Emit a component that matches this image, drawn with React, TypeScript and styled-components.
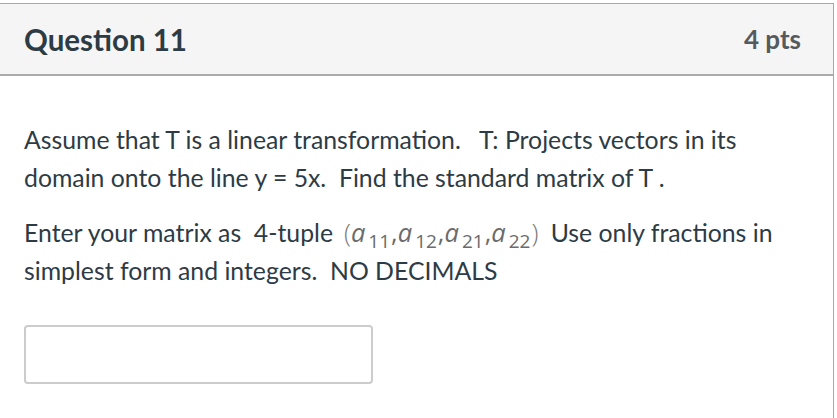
import React from "react";
import styled, { createGlobalStyle } from "styled-components";

const GlobalStyle = createGlobalStyle`
  html, body {
    margin: 0;
    padding: 0;
    background: #ffffff;
  }
  body {
    font-family: Lato, "Open Sans", "Liberation Sans", sans-serif;
    color: #2d3b45;
  }
`;

const Card = styled.div`
  margin-top: 3px;
  width: 834px;
  border-top: 1px solid #a9a9a9;
  border-right: 1px solid #a9a9a9;
  height: 415px;
  box-sizing: border-box;
`;

const Header = styled.div`
  display: flex;
  justify-content: space-between;
  align-items: center;
  height: 70px;
  padding: 0 32px 0 24px;
  background: #f5f5f5;
  border-bottom: 2px solid #ababab;
`;

const Title = styled.h2`
  margin: 0;
  font-size: 29.5px;
  font-weight: 700;
  color: #2d3b45;
`;

const Points = styled.div`
  font-size: 26px;
  font-weight: 700;
  color: #555a5e;
`;

const Body = styled.div`
  padding: 45px 24px 0 24px;
`;

const Para = styled.p`
  margin: 0 0 18px 0;
  font-size: 24.8px;
  line-height: 37.5px;
`;

const Math = styled.span`
  font-family: "Open Sans", "DejaVu Sans", sans-serif;
  color: #6b6b6b;
  font-size: 25.5px;
  margin: 0 6px 0 11px;
`;

const Paren = styled.span`
  font-weight: 300;
  color: #7a7a7a;
`;

const Var = styled.i`
  font-style: italic;
  color: #6b6b6b;
`;

const Sub = styled.span`
  display: inline-block;
  font-size: 19px;
  line-height: 1;
  transform: translateY(6px);
  margin: 0 1px 0 3px;
  color: #6b6b6b;
`;

const Comma = styled.span`
  color: #6b6b6b;
`;

const Answer = styled.input`
  display: block;
  margin-top: 36px;
  width: 349px;
  height: 59px;
  box-sizing: border-box;
  border: 2px solid #cccccc;
  border-radius: 4px;
  background: #ffffff;
  outline: none;
`;

const Entry = ({ idx, last }: { idx: string; last?: boolean }) => (
  <>
    <Var>a</Var>
    <Sub>{idx}</Sub>
    {!last && <Comma>,</Comma>}
  </>
);

export default function App() {
  return (
    <>
      <GlobalStyle />
      <Card>
        <Header>
          <Title>Question 11</Title>
          <Points>4 pts</Points>
        </Header>
        <Body>
          <Para>
            Assume that T is a linear transformation.&nbsp;&nbsp;&nbsp;T: Projects vectors in its
            domain onto the line y = 5x.&nbsp;&nbsp;Find the standard matrix of T&nbsp;.
          </Para>
          <Para>
            Enter your matrix as&nbsp;&nbsp;4-tuple
            <Math>
              <Paren>(</Paren>
              <Entry idx="11" />
              <Entry idx="12" />
              <Entry idx="21" />
              <Entry idx="22" last />
              <Paren>)</Paren>
            </Math>
            &nbsp;Use only fractions in simplest form and integers.&nbsp;&nbsp;NO DECIMALS
          </Para>
          <Answer type="text" />
        </Body>
      </Card>
    </>
  );
}
